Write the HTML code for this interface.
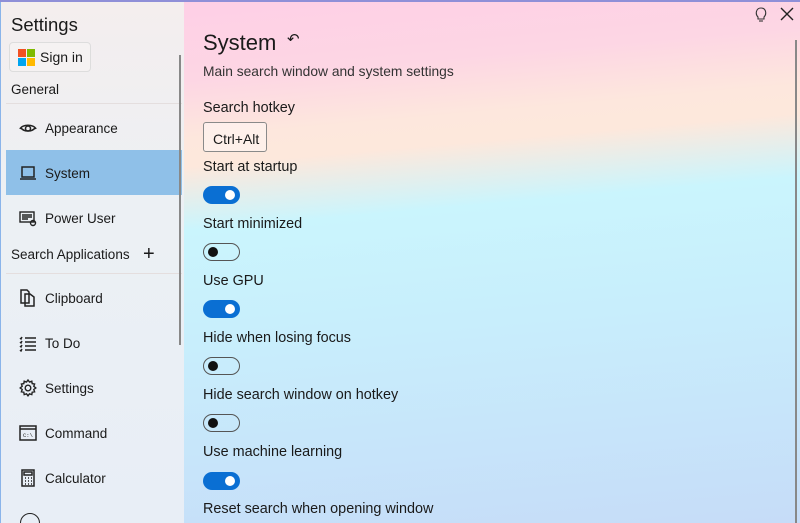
<!DOCTYPE html>
<html><head><style>
*{margin:0;padding:0;box-sizing:border-box}
html,body{width:800px;height:523px;overflow:hidden}
body{font-family:"Liberation Sans",sans-serif;color:#1a1a1a;position:relative;background:#fff}
.left{position:absolute;left:0;top:0;width:184px;height:523px;background:linear-gradient(#f4eeee,#ecf0f4 40%,#e8eef6);border-left:1px solid #8ab4ea}
.right{position:absolute;left:184px;top:0;width:616px;height:523px;background:linear-gradient(175deg,#fecfe6 0%,#fdd6e4 14%,#fde7dd 24%,#fde8dc 29%,#caf5fd 40%,#c8eefc 60%,#c6dcf8 100%)}
.topline{position:absolute;left:0;top:0;width:800px;height:2px;background:#8f8fd8}
.t{position:absolute;white-space:nowrap}
.item{position:absolute;left:19px;font-size:13.5px;display:flex;align-items:center;gap:8px;height:20px}
.item svg{width:18px;height:18px}
.lab{position:absolute;left:203px;font-size:14.4px}
.tog{position:absolute;left:203px;width:37px;height:18px;border-radius:9px}
.on{background:#0a6fd3}
.on::after{content:"";position:absolute;right:5px;top:4px;width:10px;height:10px;border-radius:50%;background:#fff}
.off{border:1px solid #555}
.off::after{content:"";position:absolute;left:4px;top:3px;width:10px;height:10px;border-radius:50%;background:#111}
</style></head><body>
<div class="left"></div>
<div class="right"></div>
<div class="topline"></div>
<div class="t" style="left:11px;top:14px;font-size:18.5px">Settings</div>
<div style="position:absolute;left:9px;top:42px;width:82px;height:30px;border:1px solid #ddd;border-radius:4px;background:#f5f2f2"></div>
<svg style="position:absolute;left:18px;top:49px" width="17" height="17"><rect width="8" height="8" fill="#f25022"/><rect x="9" width="8" height="8" fill="#7fba00"/><rect y="9" width="8" height="8" fill="#00a4ef"/><rect x="9" y="9" width="8" height="8" fill="#ffb900"/></svg>
<div class="t" style="left:40px;top:49px;font-size:14px">Sign in</div>
<div class="t" style="left:11px;top:82px;font-size:13.5px">General</div>
<div style="position:absolute;left:6px;top:103px;width:176px;height:1px;background:#e4dede"></div>
<div class="item" style="top:118px"><svg viewBox="0 0 18 18" fill="none" stroke="#222" stroke-width="1.5"><path d="M1 10C3 5 15 5 17 10"/><path d="M2 9C5 13 13 13 16 9"/><circle cx="9" cy="9.5" r="2.5"/></svg>Appearance</div>
<div style="position:absolute;left:6px;top:150px;width:176px;height:45px;background:#8fc0e8"></div>
<div class="item" style="top:163px"><svg viewBox="0 0 18 18" fill="none" stroke="#222" stroke-width="1.5"><rect x="3" y="3" width="12" height="10"/><path d="M1 15H17"/></svg>System</div>
<div class="item" style="top:208px"><svg viewBox="0 0 18 18" fill="none" stroke="#222" stroke-width="1.4"><rect x="1" y="3" width="14" height="10"/><path d="M3 6h10M3 8h10M3 10h6"/><circle cx="14" cy="14" r="2.5"/></svg>Power User</div>
<div class="t" style="left:11px;top:247px;font-size:13.5px">Search Applications</div>
<div class="t" style="left:143px;top:243px;font-size:20px;font-weight:300">+</div>
<div style="position:absolute;left:6px;top:273px;width:176px;height:1px;background:#e4dede"></div>
<div class="item" style="top:288px"><svg viewBox="0 0 18 18" fill="none" stroke="#222" stroke-width="1.5"><path d="M2 1h6l2 2v11H2z"/><path d="M6 5h5l4 3v9H6z"/></svg>Clipboard</div>
<div class="item" style="top:333px"><svg viewBox="0 0 18 18" fill="none" stroke="#222" stroke-width="1.4"><path d="M1 4l1 1 1-2M1 8l1 1 1-2M1 12l1 1 1-2M1 16l1 1 1-2M6 4h11M6 8h11M6 12h11M6 16h11"/></svg>To Do</div>
<div class="item" style="top:378px"><svg viewBox="0 0 18 18" fill="none" stroke="#222" stroke-width="1.4"><circle cx="9" cy="9" r="2.8"/><path d="M9 1l1.5 2 2.3-.8.4 2.4 2.4.4-.8 2.3 2 1.7-2 1.5.8 2.3-2.4.4-.4 2.4-2.3-.8-1.5 2-1.5-2-2.3.8-.4-2.4-2.4-.4.8-2.3-2-1.5 2-1.7-.8-2.3 2.4-.4.4-2.4 2.3.8z"/></svg>Settings</div>
<div class="item" style="top:423px"><svg viewBox="0 0 18 18" fill="none" stroke="#222" stroke-width="1.5"><rect x="1" y="2" width="16" height="14"/><path d="M1 5h16"/><text x="4" y="13" font-size="5.5" fill="#222" stroke="none" font-family="Liberation Mono">C:\</text></svg>Command</div>
<div class="item" style="top:468px"><svg viewBox="0 0 18 18" fill="none" stroke="#222" stroke-width="1.5"><rect x="3" y="1" width="12" height="16"/><rect x="5" y="3" width="8" height="3"/><path d="M6 9h1M9 9h1M12 9h1M6 12h1M9 12h1M12 12h1M6 15h1M9 15h1M12 15h1"/></svg>Calculator</div>
<div style="position:absolute;left:18px;top:510px;width:30px;height:13px;overflow:hidden"><div style="position:absolute;left:2px;top:3px;width:20px;height:20px;border:1.5px solid #222;border-radius:50%"></div></div>
<div style="position:absolute;left:179px;top:55px;width:2px;height:290px;background:#888"></div>
<div style="position:absolute;left:795px;top:40px;width:2px;height:483px;background:#888"></div>

<div class="t" style="left:203px;top:30px;font-size:22px">System</div>
<div class="t" style="left:287px;top:30px;font-size:15px">&#x21B6;</div>
<svg style="position:absolute;left:754px;top:7px" width="14" height="16" fill="none" stroke="#333" stroke-width="1.1"><path d="M4 10C1 7 2 1 7 1s6 6 3 9v2H4z"/><path d="M5 14h4"/></svg>
<svg style="position:absolute;left:780px;top:7px" width="14" height="14" stroke="#222" stroke-width="1.4"><path d="M1 1l12 12M13 1L1 13"/></svg>
<div class="t" style="left:203px;top:64px;font-size:13.8px;color:#333">Main search window and system settings</div>
<div class="lab" style="top:100px">Search hotkey</div>
<div style="position:absolute;left:203px;top:122px;width:64px;height:30px;border:1px solid #8a8a8a;border-radius:3px;background:rgba(255,255,255,.4)"></div>
<div class="t" style="left:213px;top:131px;font-size:14px">Ctrl+Alt</div>
<div class="lab" style="top:159px">Start at startup</div>
<div class="tog on" style="top:186px"></div>
<div class="lab" style="top:216px">Start minimized</div>
<div class="tog off" style="top:243px"></div>
<div class="lab" style="top:273px">Use GPU</div>
<div class="tog on" style="top:300px"></div>
<div class="lab" style="top:330px">Hide when losing focus</div>
<div class="tog off" style="top:357px"></div>
<div class="lab" style="top:387px">Hide search window on hotkey</div>
<div class="tog off" style="top:414px"></div>
<div class="lab" style="top:444px">Use machine learning</div>
<div class="tog on" style="top:472px"></div>
<div class="lab" style="top:501px">Reset search when opening window</div>
</body></html>
